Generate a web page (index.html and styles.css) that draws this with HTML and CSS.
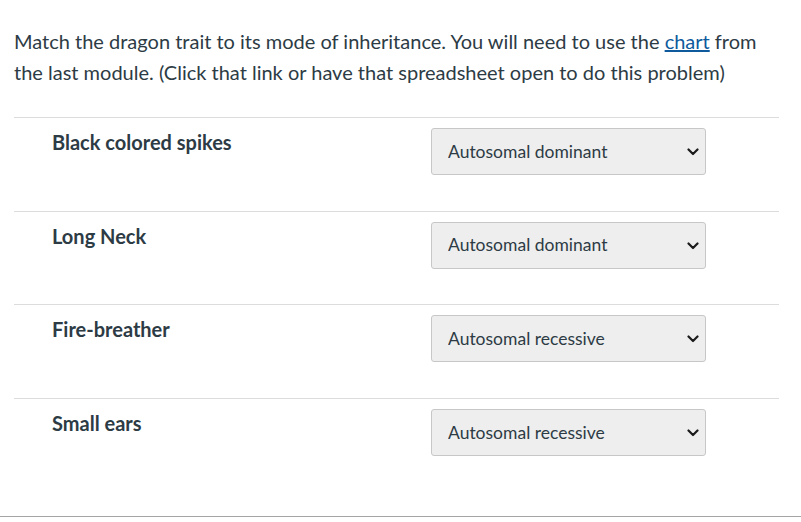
FILE: index.html
```html
<!DOCTYPE html>
<html>
<head>
    <title>Matching Question</title>
    <link rel="stylesheet" href="styles.css">
</head>
<body>
    <div class="question">
        <p class="question-text">Match the dragon trait to its mode of inheritance. You will need to use the <a href="#">chart</a> from the last module. (Click that link or have that spreadsheet open to do this problem)</p>

        <div class="answers">
            <div class="answer-row">
                <div class="answer-label">Black colored spikes</div>
                <div class="select-wrap">
                    <select class="answer-select">
                        <option>[ Choose ]</option>
                        <option selected>Autosomal dominant</option>
                        <option>Autosomal recessive</option>
                        <option>X-linked dominant</option>
                        <option>X-linked recessive</option>
                    </select>
                    <svg class="chevron" width="12" height="8" viewBox="0 0 12 8"><path d="M1.5 1.5 L6 6 L10.5 1.5" /></svg>
                </div>
            </div>
            <div class="answer-row">
                <div class="answer-label">Long Neck</div>
                <div class="select-wrap">
                    <select class="answer-select">
                        <option>[ Choose ]</option>
                        <option selected>Autosomal dominant</option>
                        <option>Autosomal recessive</option>
                        <option>X-linked dominant</option>
                        <option>X-linked recessive</option>
                    </select>
                    <svg class="chevron" width="12" height="8" viewBox="0 0 12 8"><path d="M1.5 1.5 L6 6 L10.5 1.5" /></svg>
                </div>
            </div>
            <div class="answer-row">
                <div class="answer-label">Fire-breather</div>
                <div class="select-wrap">
                    <select class="answer-select">
                        <option>[ Choose ]</option>
                        <option>Autosomal dominant</option>
                        <option selected>Autosomal recessive</option>
                        <option>X-linked dominant</option>
                        <option>X-linked recessive</option>
                    </select>
                    <svg class="chevron" width="12" height="8" viewBox="0 0 12 8"><path d="M1.5 1.5 L6 6 L10.5 1.5" /></svg>
                </div>
            </div>
            <div class="answer-row">
                <div class="answer-label">Small ears</div>
                <div class="select-wrap">
                    <select class="answer-select">
                        <option>[ Choose ]</option>
                        <option>Autosomal dominant</option>
                        <option selected>Autosomal recessive</option>
                        <option>X-linked dominant</option>
                        <option>X-linked recessive</option>
                    </select>
                    <svg class="chevron" width="12" height="8" viewBox="0 0 12 8"><path d="M1.5 1.5 L6 6 L10.5 1.5" /></svg>
                </div>
            </div>
        </div>
    </div>
</body>
</html>
```

FILE: styles.css
```css
body {
    margin: 0;
    font-family: Lato, "Open Sans", sans-serif;
    color: #2d3b45;
    background-color: #fff;
}
.question {
    height: 516px;
    border-bottom: 1px solid #a5a5a5;
}
.question-text {
    margin: 0;
    padding: 26px 14px 0 14px;
    font-size: 20px;
    line-height: 31px;
}
.question-text a {
    color: #0e5a9c;
    text-decoration: underline;
}
.answers {
    margin: 29px 22px 0 14px;
}
.answer-row {
    display: grid;
    grid-template-columns: 379px 275px;
    align-items: start;
    height: 92.7px;
    padding-left: 38px;
    border-top: 1px solid #dcdcdc;
}
.answer-label {
    margin-top: 10px;
    font-size: 20px;
    font-weight: bold;
    line-height: 28px;
}
.select-wrap {
    position: relative;
    margin-top: 10px;
    width: 275px;
    height: 47px;
}
.answer-select {
    appearance: none;
    -webkit-appearance: none;
    width: 275px;
    height: 47px;
    padding: 0 30px 1px 16px;
    font-family: Lato, "Open Sans", sans-serif;
    font-size: 17.5px;
    color: #2d3b45;
    background-color: #eeeeee;
    border: 1px solid #c7c7c7;
    border-radius: 3px;
}
.chevron {
    position: absolute;
    right: 7px;
    top: 20px;
    pointer-events: none;
}
.chevron path {
    fill: none;
    stroke: #1b1b1b;
    stroke-width: 2.2;
    stroke-linecap: round;
    stroke-linejoin: round;
}
```
